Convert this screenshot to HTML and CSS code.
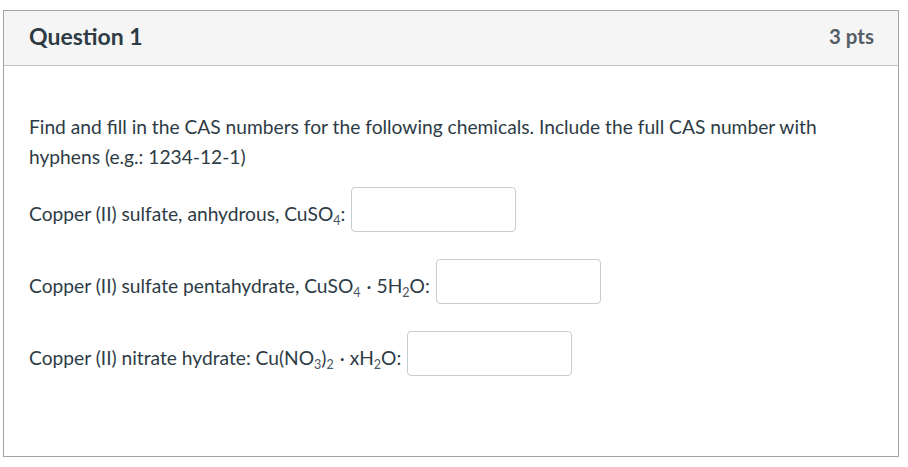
FILE: index.html
```html
<!DOCTYPE html>
<html>
<head>
<meta charset="utf-8">
<link rel="stylesheet" href="styles.css">
</head>
<body>
<div class="page">
  <div class="question">
    <div class="header">
      <div class="title">Question 1</div>
      <div class="pts">3 pts</div>
    </div>
    <div class="content">
      <p class="intro">Find and fill in the CAS numbers for the following chemicals. Include the full CAS number with hyphens (e.g.: 1234-12-1)</p>
      <p class="row">Copper (II) sulfate, anhydrous, CuSO<sub>4</sub>: <span class="input"></span></p>
      <p class="row">Copper (II) sulfate pentahydrate, CuSO<sub>4</sub><span class="dot">·</span>5H<sub>2</sub>O: <span class="input"></span></p>
      <p class="row">Copper (II) nitrate hydrate: Cu(NO<sub>3</sub>)<sub>2</sub><span class="dot">·</span>xH<sub>2</sub>O: <span class="input"></span></p>
    </div>
  </div>
</div>
</body>
</html>
```

FILE: styles.css
```css
html, body {
  margin: 0;
  padding: 0;
  background: #fff;
}
.page {
  padding: 10px 0 0 3px;
  width: 896px;
}
.question {
  border: 1px solid #a4a4a4;
  height: 447px;
  box-sizing: border-box;
  font-family: Lato, "Open Sans", sans-serif;
  color: #2d3b45;
}
.header {
  display: flex;
  justify-content: space-between;
  align-items: center;
  height: 55px;
  box-sizing: border-box;
  padding: 0 24px 4px 25px;
  background: #f5f5f5;
  border-bottom: 1px solid #c4c4c4;
}
.title {
  font-size: 23px;
  font-weight: 700;
  color: #2d3b45;
}
.pts {
  font-size: 20.5px;
  font-weight: 700;
  color: #545e66;
}
.content {
  padding: 46px 25px 0 25px;
  font-size: 19.2px;
  line-height: 30px;
}
.intro {
  margin: 0;
  padding-right: 40px;
}
.row {
  margin: 0;
  line-height: 30px;
}
.intro + .row {
  padding-top: 15px;
}
.row + .row {
  padding-top: 27px;
}
sub {
  font-size: 12.5px;
  line-height: 0;
  vertical-align: -4px;
  color: #4a5660;
}
.dot {
  margin: 0 5px 0 6px;
}
.input {
  display: inline-block;
  width: 165px;
  height: 45px;
  box-sizing: border-box;
  border: 1px solid #c7cdd1;
  border-radius: 4px;
  vertical-align: -11px;
  margin-left: 1px;
}
```
